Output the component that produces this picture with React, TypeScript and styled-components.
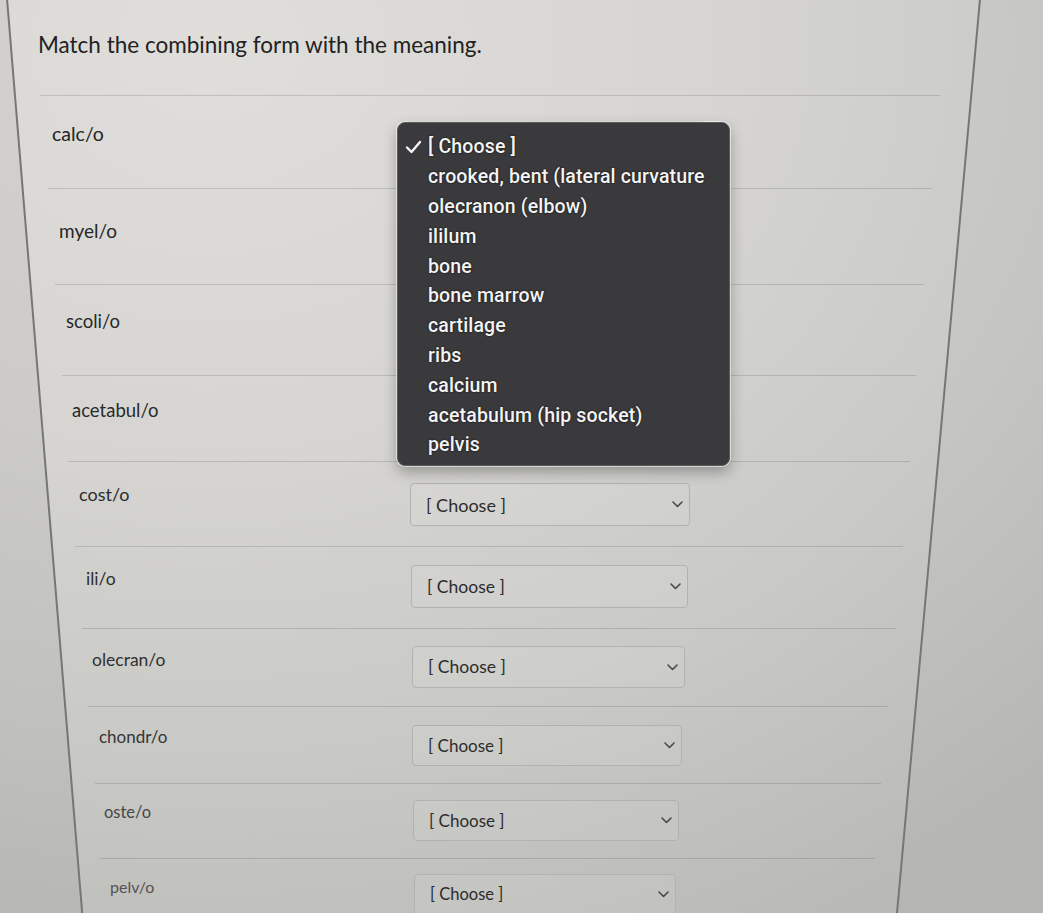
import React from 'react';
import styled, { createGlobalStyle } from 'styled-components';

type RowData = {
  label: string;
  left: number;
  right: number;
  height: number;
  font: number;
  labelPad: number;
  selectX: number;
  selectW: number;
  selectTop: number;
  selectH: number;
  selectFont: number;
  tone: string;
  covered?: boolean;
};

const rows: RowData[] = [
  { label: 'calc/o', left: 48, right: 932, height: 93, font: 19.5, labelPad: 26, selectX: 405, selectW: 300, selectTop: 25, selectH: 44, selectFont: 18, tone: '#242424', covered: true },
  { label: 'myel/o', left: 55, right: 924, height: 96, font: 19, labelPad: 31, selectX: 406, selectW: 292, selectTop: 24, selectH: 44, selectFont: 18, tone: '#262626', covered: true },
  { label: 'scoli/o', left: 62, right: 916, height: 91, font: 18.5, labelPad: 25, selectX: 407, selectW: 289, selectTop: 22, selectH: 44, selectFont: 18, tone: '#282828', covered: true },
  { label: 'acetabul/o', left: 68, right: 910, height: 86, font: 18.5, labelPad: 23, selectX: 408, selectW: 286, selectTop: 22, selectH: 43, selectFont: 18, tone: '#2a2a2a', covered: true },
  { label: 'cost/o', left: 75, right: 903, height: 85, font: 18, labelPad: 22, selectX: 410, selectW: 280, selectTop: 21, selectH: 43, selectFont: 18, tone: '#2c2c2c' },
  { label: 'ili/o', left: 82, right: 896, height: 82, font: 17.5, labelPad: 21, selectX: 411, selectW: 277, selectTop: 18, selectH: 43, selectFont: 17.5, tone: '#2e2e2e' },
  { label: 'olecran/o', left: 88, right: 888, height: 78, font: 17.5, labelPad: 20, selectX: 412, selectW: 273, selectTop: 17, selectH: 42, selectFont: 17.5, tone: '#313131' },
  { label: 'chondr/o', left: 95, right: 881, height: 77, font: 17, labelPad: 20, selectX: 412, selectW: 270, selectTop: 18, selectH: 41, selectFont: 17, tone: '#353535' },
  { label: 'oste/o', left: 100, right: 875, height: 75, font: 16.5, labelPad: 19, selectX: 413, selectW: 266, selectTop: 16, selectH: 41, selectFont: 17, tone: '#474747' },
  { label: 'pelv/o', left: 106, right: 869, height: 75, font: 16, labelPad: 18, selectX: 414, selectW: 262, selectTop: 15, selectH: 40, selectFont: 16.5, tone: '#545454' },
];

const options = [
  'crooked, bent (lateral curvature',
  'olecranon (elbow)',
  'ililum',
  'bone',
  'bone marrow',
  'cartilage',
  'ribs',
  'calcium',
  'acetabulum (hip socket)',
  'pelvis',
];

const Chevron = () => (
  <svg width="11" height="7" viewBox="0 0 11 7" fill="none">
    <polyline points="1,1 5.5,5.5 10,1" stroke="#4a4a4a" strokeWidth="1.6" strokeLinecap="round" strokeLinejoin="round" />
  </svg>
);

const Check = () => (
  <svg width="17" height="14" viewBox="0 0 17 14" fill="none">
    <polyline points="2,7.5 6.5,12 15,2" stroke="#f4f4f4" strokeWidth="2.4" strokeLinecap="round" strokeLinejoin="round" />
  </svg>
);

const App = () => {
  return (
    <>
      <GlobalStyle />
      <Page>
        <Header>
          <Title>Match the combining form with the meaning.</Title>
        </Header>
        <List>
          {rows.map((row, i) => (
            <Row key={row.label} $left={row.left} $width={row.right - row.left} $height={row.height}>
              <Label $font={row.font} $pad={row.labelPad} $width={row.selectX - row.left} $tone={row.tone}>
                {row.label}
              </Label>
              <Select $top={row.selectTop} $width={row.selectW} $height={row.selectH} $covered={!!row.covered}>
                <SelectText $font={row.selectFont}>[ Choose ]</SelectText>
                <Chevron />
              </Select>
              {i === 0 && (
                <Menu>
                  <MenuItem>
                    <CheckSlot>
                      <Check />
                    </CheckSlot>
                    [ Choose ]
                  </MenuItem>
                  {options.map((opt) => (
                    <MenuItem key={opt}>
                      <CheckSlot />
                      {opt}
                    </MenuItem>
                  ))}
                </Menu>
              )}
            </Row>
          ))}
        </List>
      </Page>
    </>
  );
};

export default App;

const GlobalStyle = createGlobalStyle`
  html, body {
    margin: 0;
    padding: 0;
    background: #cfcfcc;
  }
  * {
    box-sizing: border-box;
  }
`;

const Page = styled.div`
  /* photographed screen: two bezel edges over a soft light falloff */
  width: 1043px;
  height: 913px;
  overflow: hidden;
  font-family: Lato, 'Open Sans', sans-serif;
  background:
    linear-gradient(
      85.3deg,
      rgba(40, 40, 40, 0.06) 80.4px,
      #767674 81.4px,
      #767674 82.4px,
      transparent 83.4px
    ),
    linear-gradient(
      95.19deg,
      transparent 974.4px,
      #767674 975.4px,
      #767674 976.4px,
      rgba(0, 0, 0, 0.02) 977.4px
    ),
    radial-gradient(ellipse 120% 110% at 20% 5%, #dfdedb 0%, #d6d5d2 40%, #c9c9c6 70%, #b9b9b6 100%);
`;

const Header = styled.div`
  margin-left: 40px;
  width: 900px;
  height: 96px;
  padding-top: 31px;
  border-bottom: 1px solid rgba(0, 0, 0, 0.13);
`;

const Title = styled.h1`
  margin: 0 0 0 -2px;
  font-family: Lato, 'Open Sans', sans-serif;
  font-weight: 400;
  font-size: 22.5px;
  line-height: 1.2;
  color: #222;
`;

const List = styled.div`
  display: flex;
  flex-direction: column;
`;

const Row = styled.div<{ $left: number; $width: number; $height: number }>`
  position: relative;
  display: flex;
  align-items: flex-start;
  margin-left: ${(p) => p.$left}px;
  width: ${(p) => p.$width}px;
  height: ${(p) => p.$height}px;
  flex: none;
  border-bottom: 1px solid rgba(0, 0, 0, 0.13);
`;

const Label = styled.div<{ $font: number; $pad: number; $width: number; $tone: string }>`
  flex: none;
  width: ${(p) => p.$width}px;
  padding: ${(p) => p.$pad}px 0 0 4px;
  font-size: ${(p) => p.$font}px;
  line-height: 1.2;
  color: ${(p) => p.$tone};
`;

const Select = styled.div<{ $top: number; $width: number; $height: number; $covered: boolean }>`
  flex: none;
  display: flex;
  align-items: center;
  justify-content: space-between;
  margin-top: ${(p) => p.$top}px;
  width: ${(p) => p.$width}px;
  height: ${(p) => p.$height}px;
  padding: 0 6px 0 15px;
  border: 1px solid #b2b2af;
  border-radius: 4px;
  background: rgba(255, 255, 255, 0.08);

  /* the open popup hides these, so their contents stay unpainted */
  & > * {
    visibility: ${(p) => (p.$covered ? 'hidden' : 'visible')};
  }
`;

const SelectText = styled.span<{ $font: number }>`
  font-size: ${(p) => p.$font}px;
  line-height: 1;
  color: #2c2c2c;
`;

const Menu = styled.div`
  /* native select popup, open over the first rows */
  position: absolute;
  left: 349px;
  top: 26px;
  z-index: 2;
  width: 333px;
  padding: 9px 0 5px;
  background: #3a393c;
  border: 1px solid #5b5a5d;
  border-radius: 8px;
  box-shadow: 0 0 0 1px rgba(255, 255, 255, 0.55), 0 6px 14px rgba(0, 0, 0, 0.3);
`;

const MenuItem = styled.div`
  display: flex;
  align-items: center;
  height: 29.8px;
  padding-left: 7px;
  font-family: Roboto, 'Liberation Sans', sans-serif;
  font-weight: 500;
  font-size: 19.5px;
  letter-spacing: 0.15px;
  color: #f4f4f4;
  white-space: nowrap;
  overflow: hidden;
  text-shadow: 0 0 2px rgba(0, 0, 0, 0.9);
`;

const CheckSlot = styled.span`
  display: inline-flex;
  align-items: center;
  width: 23px;
  flex: none;
`;
